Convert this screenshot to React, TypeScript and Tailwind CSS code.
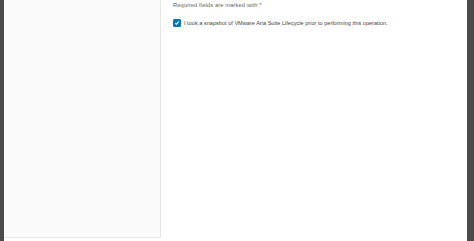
export default function App() {
  return (
    <div className="flex h-[241px] w-[474px] overflow-hidden bg-[#4b4b4b] font-['Liberation_Sans',sans-serif]">
      <div className="ml-[4px] flex h-full w-[463px] shrink-0 bg-white">
        {/* step sidebar */}
        <aside className="h-[238px] w-[157px] shrink-0 border-r border-b border-[#e6e6e6] bg-[#fafafa]" />
        <main className="flex-1 pl-[12px]">
          <p className="mt-[1px] text-[5.8px] leading-[8px] tracking-[0.1px] text-[#666]">Required fields are marked with *</p>
          <label className="mt-[10px] flex items-center gap-[3px]">
            <span className="flex h-[8px] w-[8px] items-center justify-center rounded-[1.5px] bg-[#0079b8]">
              <svg viewBox="0 0 10 10" className="h-[6px] w-[6px]" fill="none" stroke="white" strokeWidth={1.8}>
                <path d="M2 5.2l2 2 4-4.4" />
              </svg>
            </span>
            <span className="text-[5.6px] leading-[8px] text-[#444]">
              I took a snapshot of VMware Aria Suite Lifecycle prior to performing this operation.
            </span>
          </label>
        </main>
      </div>
    </div>
  );
}
